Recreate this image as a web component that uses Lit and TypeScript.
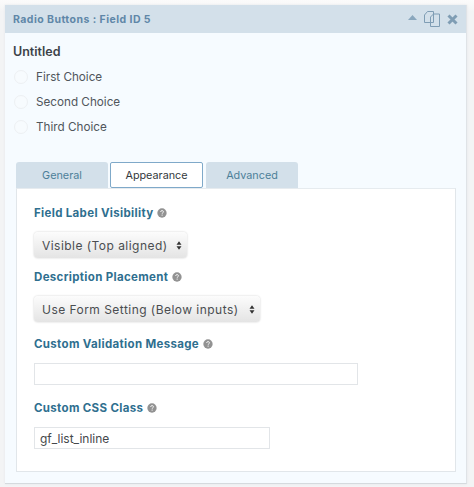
import { LitElement, html, css } from "lit";
import { customElement } from "lit/decorators.js";

const help = html`<svg class="help" viewBox="0 0 12 12" aria-hidden="true"><circle cx="6" cy="6" r="5.6" fill="#929292"/><path d="M4.300 4.700c.1-1 .8-1.600 1.800-1.600s1.700.6 1.700 1.400c0 1.200-1.600 1.200-1.600 2.400" fill="none" stroke="#f4f4f4" stroke-width="1.200"/><rect x="5.500" y="7.900" width="1.300" height="1.300" fill="#f4f4f4"/></svg>`;
const arrows = html`<svg class="arrows" viewBox="0 0 7 12" aria-hidden="true"><path d="M3.500 1 6.400 5H.6zM3.500 11 .6 7h5.800z" fill="#333"/></svg>`;

@customElement("app-root")
export class AppRoot extends LitElement {
  static styles = css`
    :host { display: block; width: 474px; height: 487px; background: #f3f4f5; font-family: "Inter", "Liberation Sans", sans-serif; overflow: hidden; }
    * { box-sizing: border-box; }
    .page { padding: 5px 7px 3px 5px; height: 487px; background: linear-gradient(#fbfbfb, #f3f4f5 12px); }
    .card { height: 479px; background: #f6fbff; border-right: 1px solid #dfe3e7; border-bottom: 1px solid #d5dade; box-shadow: 0 0 2px #e3e5e8; display: flex; flex-direction: column; }
    .head { height: 28px; flex: none; background: #d3e0ea; display: flex; align-items: center; padding: 0 8px 0 8px; }
    .title { font-size: 10.5px; font-weight: 700; letter-spacing: .45px; color: #5f87a8; flex: 1; }
    .icons { display: flex; align-items: center; gap: 7px; }
    .up { margin-top: -3px; }
    .body { padding: 11px 10px 11px 11px; display: flex; flex-direction: column; flex: 1; }
    .untitled { font-size: 12.5px; font-weight: 600; color: #3c4248; line-height: 15px; margin-left: -3px; }
    .choices { display: flex; flex-direction: column; gap: 7px; margin: 9px 0 0 -2px; }
    .choice { display: flex; align-items: center; height: 18px; gap: 8px; font-size: 11.7px; color: #50565c; }
    .radio { width: 14px; height: 14px; border: 1px solid #edf0f3; border-radius: 50%; background: #f7fbfe; }
    .tabs { display: flex; gap: 2px; margin-top: 26px; height: 26px; position: relative; z-index: 1; }
    .tab { width: 92px; height: 26px; border-radius: 3px 3px 0 0; background: #d3e0ea; color: #4d7f99; font-size: 10.8px; display: flex; align-items: center; justify-content: center; }
    .tab.on { width: 93px; background: #fff; color: #33383c; border: 1px solid #7fa9c9; border-radius: 2px; }
    .tab.last { margin-left: 1px; }
    .panel { flex: 1; background: #fff; border: 1px solid #e1e6ea; border-top: 1px solid #e6ebef; padding: 15px 17px 0; display: flex; flex-direction: column; align-items: flex-start; }
    .lab { display: flex; align-items: center; gap: 4px; height: 16px; padding-top: 1px; font-size: 11.5px; font-weight: 700; letter-spacing: .33px; color: #2f6f8f; white-space: nowrap; }
    .help { width: 10px; height: 10px; }
    .select { height: 26px; margin: 12px 0 10px; background: linear-gradient(#fcfcfc, #e4e4e4); border-radius: 4px; box-shadow: 0 0 2px #c8c8c8; font-size: 12px; letter-spacing: .46px; color: #4a4d50; display: flex; align-items: center; justify-content: space-between; padding: 0 5px 0 8px; white-space: nowrap; }
    .select.short { width: 153px; }
    .select.wide { width: 226px; margin-bottom: 13px; }
    .arrows { width: 6px; height: 11px; flex: none; }
    .input { height: 22px; background: #fff; border: 1px solid #e2e5e8; font-size: 12px; color: #45484b; display: flex; align-items: center; padding: 0 5px; margin: 12px 0 14px; }
    .input.long { width: 324px; }
    .input.mid { width: 236px; }
  `;

  render() {
    return html`<div class="page"><div class="card">
      <div class="head">
        <div class="title">Radio Buttons : Field ID 5</div>
        <div class="icons">
          <svg class="up" width="9" height="5" viewBox="0 0 9 5"><path d="M4.500 0 9 5H0z" fill="#8aa7bd"/></svg>
          <svg width="16" height="16" viewBox="0 0 16 16" fill="#d3e0ea" stroke="#7f9db4" stroke-width="1"><path d="M.5 4 3.500.5h6v11H.5zM6.500 6l3-3h6v12.500h-9z"/></svg>
          <svg width="11" height="11" viewBox="0 0 11 11"><path d="M1.500 1.500 9.500 9.500M9.500 1.500 1.500 9.500" stroke="#7f9db4" stroke-width="3"/></svg>
        </div>
      </div>
      <div class="body">
        <div class="untitled">Untitled</div>
        <div class="choices">
          ${["First Choice", "Second Choice", "Third Choice"].map((c) => html`<div class="choice"><span class="radio"></span>${c}</div>`)}
        </div>
        <div class="tabs">
          <div class="tab">General</div>
          <div class="tab on">Appearance</div>
          <div class="tab last">Advanced</div>
        </div>
        <div class="panel">
          <div class="lab">Field Label Visibility ${help}</div>
          <div class="select short">Visible (Top aligned) ${arrows}</div>
          <div class="lab">Description Placement ${help}</div>
          <div class="select wide">Use Form Setting (Below inputs) ${arrows}</div>
          <div class="lab">Custom Validation Message ${help}</div>
          <div class="input long"></div>
          <div class="lab">Custom CSS Class ${help}</div>
          <div class="input mid">gf_list_inline</div>
        </div>
      </div>
    </div></div>`;
  }
}
